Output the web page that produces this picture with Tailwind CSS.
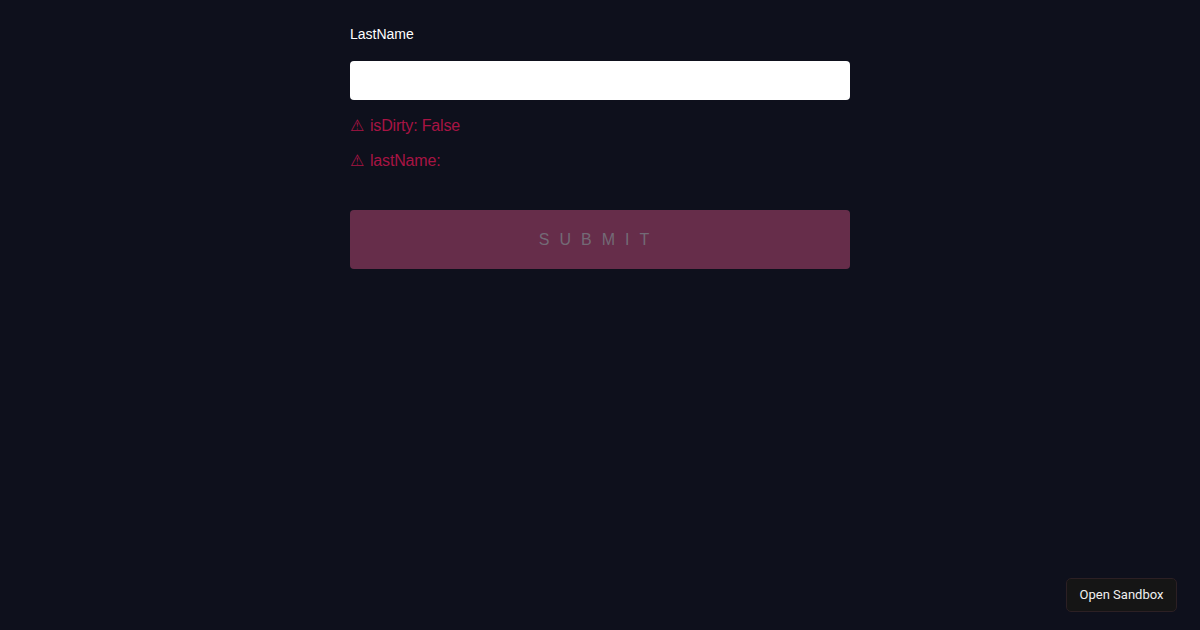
<!DOCTYPE html>
<html lang="en">
<head>
    <meta charset="UTF-8">
    <title>LastName</title>
    <script src="https://cdn.jsdelivr.net/npm/@tailwindcss/browser@4"></script>
</head>
<body class="bg-[#0e101c] h-[630px] overflow-hidden font-['Liberation_Sans',Arial,sans-serif]">
    <form class="w-[500px] mx-auto pt-[26px]">
        <label class="block text-[14px] leading-[17px] text-white mb-[18px]">LastName</label>
        <input type="text" class="block w-full h-[39px] bg-white rounded px-[10px] text-[14px]">
        <p class="text-[16px] leading-[18px] text-[#a81444] tracking-[-0.18px] mt-[17px]"><span class="inline-block w-[20px]">⚠</span>isDirty: False</p>
        <p class="text-[16px] leading-[18px] text-[#a81444] tracking-[-0.18px] mt-[17px]"><span class="inline-block w-[20px]">⚠</span>lastName:</p>
        <button type="button" disabled class="block w-full h-[59px] mt-[40px] pr-[2px] rounded bg-[#ec5990]/40 text-[#736a76] text-[16px] uppercase tracking-[10px]">Submit</button>
    </form>
    <button type="button" class="fixed right-[23px] bottom-[18px] w-[111px] h-[34px] rounded-[5px] border border-[#2c2024] bg-[#151515] text-[#f0f0f0] text-[13px] font-['Roboto',sans-serif]">Open Sandbox</button>
</body>
</html>
